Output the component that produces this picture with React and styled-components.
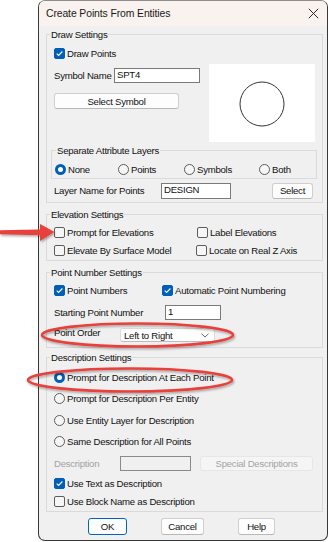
import React from 'react';
import styled, { createGlobalStyle } from 'styled-components';

const FONT = `"Liberation Sans", Arial, sans-serif`;

const GlobalStyle = createGlobalStyle`
  html, body { margin: 0; padding: 0; background: #ffffff; }
  body { font-family: ${FONT}; }
  *, *::before, *::after { box-sizing: border-box; }
`;

const Page = styled.div`
  position: relative;
  width: 328px;
  height: 542px;
  padding-left: 38px;
  overflow: hidden;
  background: #ffffff;
  font-family: ${FONT};
  font-size: 9.6px;
  letter-spacing: -0.25px;
  color: #111111;
`;

const Dialog = styled.div`
  width: 290px;
  height: 541px;
  border: 1px solid #383838;
  border-top-color: #8c8c8c;
  border-radius: 7px;
  background: #f0f0f0;
  overflow: hidden;
  display: flex;
  flex-direction: column;
`;

const TitleBar = styled.div`
  height: 25px;
  flex: none;
  display: flex;
  align-items: center;
  justify-content: space-between;
  padding: 0 8px 0 7px;
  background: #f9f2ee;
`;

const TitleText = styled.span`
  font-size: 10.4px;
  letter-spacing: -0.1px;
  color: #1a1a1a;
  line-height: 14px;
  padding-top: 1px;
`;

const Body = styled.div`
  display: flex;
  flex-direction: column;
  padding: 0 4px 0 7px;
`;

const GroupBox = styled.div`
  position: relative;
  margin-top: ${(p) => p.$mt || 0}px;
  padding: ${(p) => p.$pad || '0'};
  border: 1px solid #dadada;
  display: flex;
  flex-direction: column;
`;

const Legend = styled.span`
  position: absolute;
  top: -7px;
  left: ${(p) => p.$left || 2}px;
  padding: 0 1px;
  line-height: 13px;
  background: #f0f0f0;
  white-space: nowrap;
`;

const TopArea = styled.div`
  display: flex;
  justify-content: space-between;
  height: 107px;
`;

const LeftCol = styled.div`
  display: flex;
  flex-direction: column;
  padding: 11px 0 0 3px;
`;

const Row = styled.div`
  display: flex;
  align-items: ${(p) => p.$align || 'center'};
  height: ${(p) => p.$h || 14}px;
  margin-top: ${(p) => p.$mt || 0}px;
  padding-left: ${(p) => (p.$pl === undefined ? 3 : p.$pl)}px;
`;

const GridRow = styled(Row)`
  display: grid;
  grid-template-columns: ${(p) => p.$cols};
  align-items: center;
`;

const Item = styled.label`
  display: inline-flex;
  align-items: center;
  gap: 2px;
  white-space: nowrap;
  line-height: 13px;
`;

const CheckBoxBox = styled.span`
  width: 11px;
  height: 11px;
  flex: none;
  border-radius: 2px;
  border: 1px solid ${(p) => (p.$checked ? '#005fb8' : '#5c5c5c')};
  background: ${(p) => (p.$checked ? '#005fb8' : '#f6f6f6')};
  display: flex;
  align-items: center;
  justify-content: center;
`;

const RadioCircle = styled.span`
  width: 11px;
  height: 11px;
  flex: none;
  border-radius: 50%;
  border: ${(p) => (p.$checked ? '3.5px solid #005fb8' : '1px solid #5c5c5c')};
  background: ${(p) => (p.$checked ? '#ffffff' : '#f6f6f6')};
`;

const Label = styled.span`
  width: ${(p) => p.$w}px;
  flex: none;
  line-height: 13px;
  white-space: nowrap;
  color: ${(p) => (p.$muted ? '#a3a3a3' : '#111111')};
  margin-top: ${(p) => p.$mt || 0}px;
`;

const TextField = styled.div`
  width: ${(p) => p.$w}px;
  height: ${(p) => p.$h || 15}px;
  flex: none;
  background: ${(p) => (p.$disabled ? '#f0f0f0' : '#ffffff')};
  border: 1px solid ${(p) => (p.$disabled ? '#8a8a8a' : '#7a7a7a')};
  padding: 0 2px;
  line-height: 12px;
  color: #111;
  white-space: nowrap;
`;

const Button = styled.div`
  width: ${(p) => p.$w}px;
  height: ${(p) => p.$h || 16}px;
  flex: none;
  margin-left: ${(p) => (p.$ml === 'auto' ? 'auto' : `${p.$ml || 0}px`)};
  margin-right: ${(p) => p.$mr || 0}px;
  margin-top: ${(p) => p.$mt || 0}px;
  display: flex;
  align-items: center;
  justify-content: center;
  border-radius: 3px;
  background: ${(p) => (p.$disabled ? '#f5f5f5' : '#fdfdfd')};
  border: 1px solid
    ${(p) => (p.$primary ? '#0067c0' : p.$disabled ? '#e6e6e6' : '#cfcfcf')};
  border-bottom-color: ${(p) => (p.$primary ? '#0067c0' : p.$disabled ? '#e6e6e6' : '#b8b8b8')};
  color: ${(p) => (p.$disabled ? '#a3a3a3' : '#111111')};
  white-space: nowrap;
  line-height: 13px;
`;

const Preview = styled.div`
  width: 106px;
  height: 78px;
  margin-top: 29px;
  margin-right: 2px;
  background: #ffffff;
  display: flex;
  align-items: center;
  justify-content: center;
`;

const Dropdown = styled.div`
  width: ${(p) => p.$w}px;
  height: 14px;
  flex: none;
  display: flex;
  align-items: center;
  justify-content: space-between;
  padding: 1px 5px 0 3px;
  border-radius: 3px;
  background: #fdfdfd;
  border: 1px solid #dcdcdc;
  border-bottom-color: #bdbdbd;
  line-height: 12px;
`;

const ButtonRow = styled.div`
  display: flex;
  gap: 34px;
  margin-top: 6px;
  padding-left: 42px;
`;

const Overlay = styled.svg`
  position: absolute;
  left: 0;
  top: 0;
  pointer-events: none;
`;

const Check = ({ checked, children }) => (
  <Item>
    <CheckBoxBox $checked={checked}>
      {checked && (
        <svg width="9" height="9" viewBox="0 0 9 9">
          <path d="M1.7 4.7 L3.6 6.5 L7.4 2.5" fill="none" stroke="#ffffff" strokeWidth="1.1" />
        </svg>
      )}
    </CheckBoxBox>
    <span>{children}</span>
  </Item>
);

const Radio = ({ checked, children }) => (
  <Item>
    <RadioCircle $checked={checked} />
    <span>{children}</span>
  </Item>
);

const CloseIcon = () => (
  <svg width="11" height="11" viewBox="0 0 11 11">
    <path d="M0.8 0.8 L10.2 10.2 M10.2 0.8 L0.8 10.2" stroke="#2a2a2a" strokeWidth="1" fill="none" />
  </svg>
);

const Chevron = () => (
  <svg width="8" height="5" viewBox="0 0 8 5">
    <path d="M0.5 0.7 L4 4 L7.5 0.7" stroke="#6a6a6a" strokeWidth="1" fill="none" />
  </svg>
);

export default function App() {
  return (
    <>
      <GlobalStyle />
      <Page>
        <Dialog>
          <TitleBar>
            <TitleText>Create Points From Entities</TitleText>
            <CloseIcon />
          </TitleBar>
          <Body>
            <GroupBox $mt={8} $pad="0 5px 3px 4px">
              <Legend $left={3}>Draw Settings</Legend>
              <TopArea>
                <LeftCol>
                  <Row $pl={0}>
                    <Check checked>Draw Points</Check>
                  </Row>
                  <Row $pl={0} $mt={8} $h={15}>
                    <Label $w={60}>Symbol Name</Label>
                    <TextField $w={86}>SPT4</TextField>
                  </Row>
                  <Button $w={125} $mt={10}>Select Symbol</Button>
                </LeftCol>
                <Preview>
                  <svg width="106" height="78" viewBox="0 0 106 78">
                    <circle cx="53" cy="40" r="22" fill="none" stroke="#333" strokeWidth="1" />
                  </svg>
                </Preview>
              </TopArea>
              <GroupBox $mt={8} $pad="11px 0 2px 0">
                <Legend $left={4}>Separate Attribute Layers</Legend>
                <GridRow $cols="63px 66px 75px auto">
                  <Radio checked>None</Radio>
                  <Radio>Points</Radio>
                  <Radio>Symbols</Radio>
                  <Radio>Both</Radio>
                </GridRow>
              </GroupBox>
              <Row $mt={3} $h={17}>
                <Label $w={107}>Layer Name for Points</Label>
                <TextField $w={70} $h={16}>DESIGN</TextField>
                <Button $w={41} $ml="auto" $mr={4}>Select</Button>
              </Row>
            </GroupBox>

            <GroupBox $mt={11} $pad="10px 5px 3px 4px">
              <Legend $left={3}>Elevation Settings</Legend>
              <GridRow $cols="143px auto">
                <Check>Prompt for Elevations</Check>
                <Check>Label Elevations</Check>
              </GridRow>
              <GridRow $cols="142px auto" $mt={4}>
                <Check>Elevate By Surface Model</Check>
                <Check>Locate on Real Z Axis</Check>
              </GridRow>
            </GroupBox>

            <GroupBox $mt={11} $pad="10px 5px 5px 4px">
              <Legend $left={3}>Point Number Settings</Legend>
              <GridRow $cols="108px auto">
                <Check checked>Point Numbers</Check>
                <Check checked>Automatic Point Numbering</Check>
              </GridRow>
              <Row $mt={8} $h={15}>
                <Label $w={111}>Starting Point Number</Label>
                <TextField $w={56}>1</TextField>
              </Row>
              <Row $mt={8} $h={14}>
                <Label $w={66} $mt={-5}>Point Order</Label>
                <Dropdown $w={95}>
                  <span>Left to Right</span>
                  <Chevron />
                </Dropdown>
              </Row>
            </GroupBox>

            <GroupBox $mt={9} $pad="12px 5px 3px 4px">
              <Legend $left={3}>Description Settings</Legend>
              <Row>
                <Radio checked>Prompt for Description At Each Point</Radio>
              </Row>
              <Row $mt={7}>
                <Radio>Prompt for Description Per Entity</Radio>
              </Row>
              <Row $mt={8}>
                <Radio>Use Entity Layer for Description</Radio>
              </Row>
              <Row $mt={7}>
                <Radio>Same Description for All Points</Radio>
              </Row>
              <Row $mt={7} $h={17}>
                <Label $w={66} $muted>Description</Label>
                <TextField $w={71} $disabled />
                <Button $w={113} $h={15} $ml={9} $disabled>Special Descriptions</Button>
              </Row>
              <Row $mt={4}>
                <Check checked>Use Text as Description</Check>
              </Row>
              <Row $mt={4}>
                <Check>Use Block Name as Description</Check>
              </Row>
            </GroupBox>

            <ButtonRow>
              <Button $w={39} $h={17} $primary>OK</Button>
              <Button $w={43} $h={17}>Cancel</Button>
              <Button $w={37} $h={17}>Help</Button>
            </ButtonRow>
          </Body>
        </Dialog>

        <Overlay width="328" height="542" viewBox="0 0 328 542">
          <defs>
            <filter id="sh" x="-20%" y="-50%" width="140%" height="200%">
              <feDropShadow dx="1" dy="1.5" stdDeviation="1" floodColor="#000" floodOpacity="0.35" />
            </filter>
          </defs>
          <g filter="url(#sh)">
            <path
              d="M0 230.2 L40 229.4 L40 224 L54.5 232 L40 241 L40 235.2 L0 234.2 Z"
              fill="#e8403b"
            />
            <ellipse cx="137.5" cy="335" rx="95.5" ry="11.5" fill="none" stroke="#e8403b" strokeWidth="2.6" />
            <ellipse cx="130" cy="380" rx="102" ry="11.5" fill="none" stroke="#e8403b" strokeWidth="2.6" />
          </g>
        </Overlay>
      </Page>
    </>
  );
}
